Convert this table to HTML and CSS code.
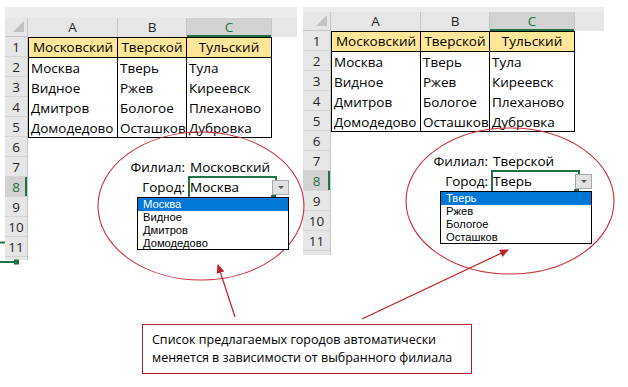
FILE: index.html
```html
<!DOCTYPE html>
<html lang="ru">
<head>
<meta charset="utf-8">
<title>Зависимый выпадающий список</title>
<link rel="stylesheet" href="styles.css">
</head>
<body>
<div class="page">
  <div class="sheets">
    <section class="sheet sheet-left">
      <div class="strip"></div>
      <div class="body">
        <div class="rowheads">
          <div class="corner"><span class="tri"></span></div>
          <div class="rh">1</div><div class="rh">2</div><div class="rh">3</div><div class="rh">4</div>
          <div class="rh">5</div><div class="rh">6</div><div class="rh">7</div><div class="rh active">8</div>
          <div class="rh">9</div><div class="rh">10</div><div class="rh">11</div><div class="rh partial"></div>
        </div>
        <div class="cols">
          <div class="colheads">
            <div class="ch ca">A</div><div class="ch cb">B</div><div class="ch cc active">C</div><div class="ch cx"></div>
          </div>
          <div class="tbl">
            <div class="cell hd">Московский</div><div class="cell hd">Тверской</div><div class="cell hd">Тульский</div>
            <div class="cell">Москва</div><div class="cell">Тверь</div><div class="cell">Тула</div>
            <div class="cell">Видное</div><div class="cell">Ржев</div><div class="cell">Киреевск</div>
            <div class="cell">Дмитров</div><div class="cell">Бологое</div><div class="cell">Плеханово</div>
            <div class="cell">Домодедово</div><div class="cell">Осташков</div><div class="cell">Дубровка</div>
          </div>
          <div class="form">
            <div class="frow short"></div>
            <div class="frow"><div class="lbl">Филиал:</div><div class="val">Московский</div></div>
            <div class="frow"><div class="lbl">Город:</div>
              <div class="val sel">Москва
                <span class="dd-btn"></span>
                <ul class="dd-list">
                  <li class="on">Москва</li><li>Видное</li><li>Дмитров</li><li>Домодедово</li>
                </ul>
              </div>
            </div>
          </div>
        </div>
      </div>
    </section>

    <section class="sheet sheet-right">
      <div class="strip"></div>
      <div class="body">
        <div class="rowheads">
          <div class="corner"><span class="tri"></span></div>
          <div class="rh">1</div><div class="rh">2</div><div class="rh">3</div><div class="rh">4</div>
          <div class="rh">5</div><div class="rh">6</div><div class="rh">7</div><div class="rh active">8</div>
          <div class="rh">9</div><div class="rh">10</div><div class="rh">11</div><div class="rh partial"></div>
        </div>
        <div class="cols">
          <div class="colheads">
            <div class="ch ca">A</div><div class="ch cb">B</div><div class="ch cc active">C</div><div class="ch cx"></div>
          </div>
          <div class="tbl">
            <div class="cell hd">Московский</div><div class="cell hd">Тверской</div><div class="cell hd">Тульский</div>
            <div class="cell">Москва</div><div class="cell">Тверь</div><div class="cell">Тула</div>
            <div class="cell">Видное</div><div class="cell">Ржев</div><div class="cell">Киреевск</div>
            <div class="cell">Дмитров</div><div class="cell">Бологое</div><div class="cell">Плеханово</div>
            <div class="cell">Домодедово</div><div class="cell">Осташков</div><div class="cell">Дубровка</div>
          </div>
          <div class="form">
            <div class="frow short"></div>
            <div class="frow"><div class="lbl">Филиал:</div><div class="val">Тверской</div></div>
            <div class="frow"><div class="lbl">Город:</div>
              <div class="val sel">Тверь
                <span class="dd-btn"></span>
                <ul class="dd-list">
                  <li class="on">Тверь</li><li>Ржев</li><li>Бологое</li><li>Осташков</li>
                </ul>
              </div>
            </div>
          </div>
        </div>
      </div>
    </section>
  </div>

  <div class="note">Список предлагаемых городов автоматически<br>меняется в зависимости от выбранного филиала</div>

  <svg class="annot" width="628" height="387" viewBox="0 0 628 387" aria-hidden="true">
    <defs>
      <marker id="ah" markerWidth="9" markerHeight="8" refX="8" refY="4" orient="auto" markerUnits="userSpaceOnUse">
        <path d="M0,0 L9,4 L0,8 z" fill="#c0202a"/>
      </marker>
    </defs>
    <ellipse cx="201" cy="206" rx="103" ry="74" fill="none" stroke="#c8303a" stroke-width="1.1"/>
    <ellipse cx="510" cy="201" rx="104" ry="73" fill="none" stroke="#c8303a" stroke-width="1.1"/>
    <line x1="235" y1="317" x2="218" y2="265" stroke="#c0202a" stroke-width="1.2" marker-end="url(#ah)"/>
    <line x1="362" y1="319" x2="508" y2="250" stroke="#c0202a" stroke-width="1.2" marker-end="url(#ah)"/>
    <path d="M0 242.5 H5" stroke="#217346" stroke-width="2"/>
    <path d="M0 262 H15" stroke="#217346" stroke-width="2"/>
    <rect x="14" y="259.5" width="5" height="5" fill="#217346"/>
  </svg>
</div>
</body>
</html>
```
FILE: styles.css
```css
* { box-sizing: border-box; margin: 0; padding: 0; }
html, body { width: 628px; height: 387px; overflow: hidden; background: #fff; }
body { font-family: "Open Sans", "Liberation Sans", sans-serif; color: #000; }

.page { position: relative; width: 628px; height: 387px; padding: 7px 0 0 5px; }
.sheets { display: flex; gap: 6px; align-items: flex-start; }
.sheet { display: flex; flex-direction: column; }

.strip { background: #ececec; }
.sheet-left .strip { height: 11px; }
.sheet-right .strip { height: 5px; }

.body { display: flex; align-items: flex-start; }

.rowheads { display: flex; flex-direction: column; background: #e6e6e6; border-right: 1px solid #c6c6c6; }
.sheet-left .rowheads { width: 23px; }
.sheet-right .rowheads { width: 28px; }

.corner { position: relative; height: 19px; border-bottom: 1px solid #c6c6c6; }
.tri { position: absolute; right: 3px; bottom: 4px; width: 11px; height: 11px; background: #c2c2c2; clip-path: polygon(100% 0, 100% 100%, 0 100%); }

.rh { height: 20px; border-bottom: 1px solid #d4d4d4; text-align: center; font-size: 13.5px; line-height: 20px; color: #262626; }
.rh.active { background: #d2d2d2; color: #217346; box-shadow: inset -2px 0 0 #217346; }
.rh.partial { border-bottom: 0; }
.sheet-left .rh.partial { height: 3px; }
.sheet-right .rh.partial { height: 4px; }

.cols { display: flex; flex-direction: column; }
.colheads { display: flex; height: 19px; background: #e6e6e6; }
.ch { border-right: 1px solid #c6c6c6; text-align: center; font-size: 13.5px; line-height: 19px; color: #262626; }
.ch.ca { width: 90px; }
.ch.cb { width: 69px; }
.ch.cc { width: 85px; }
.ch.active { background: #d2d2d2; color: #217346; box-shadow: inset 0 -2px 0 #217346; }
.ch.cx { border-right: 0; }
.sheet-left .ch.cx { width: 25px; }
.sheet-right .ch.cx { width: 29px; }

.tbl { display: grid; grid-template-columns: 89px 69px 85px; grid-template-rows: 20px 20px 20px 20px 19px; border: 1px solid #000; border-right: 0; width: 244px; }
.cell { border-right: 1px solid #000; padding: 0 2px; font-size: 13.5px; line-height: 20px; white-space: nowrap; overflow: hidden; }
.cell.hd { background: #ffe699; text-align: center; border-bottom: 1px solid #000; line-height: 19px; }

.form { width: 244px; }
.frow { display: grid; grid-template-columns: 90px 69px 85px; height: 20px; font-size: 13.5px; line-height: 20px; }
.frow.short { height: 19px; }
.lbl { grid-column: 2; text-align: right; padding-right: 2px; white-space: nowrap; }
.val { grid-column: 3; padding-left: 3px; white-space: nowrap; }

.sel { position: relative; }
.sel::before { content: ""; position: absolute; left: 1px; top: -1px; width: 85px; height: 21px; border: 2px solid #217346; }
.sel::after { content: ""; position: absolute; left: 83px; top: 17px; width: 5px; height: 5px; background: #217346; border: 1px solid #fff; }

.dd-btn { position: absolute; left: 85px; top: 3px; width: 17px; height: 15px; background: #e1e1e1; border: 1px solid #a8a8a8; z-index: 1; }
.dd-btn::after { content: ""; position: absolute; left: 5px; top: 5px; border-left: 3px solid transparent; border-right: 3px solid transparent; border-top: 3px solid #5a5a5a; }

.dd-list { position: absolute; left: -50px; top: 20px; width: 152px; height: 53px; background: #fff; border: 1px solid #000; list-style: none; font-family: "Liberation Sans", Arial, sans-serif; font-size: 11.2px; line-height: 13px; z-index: 2; }
.dd-list li { height: 13px; padding-left: 5px; color: #000; }
.dd-list li.on { background: #0078d7; color: #fff; }

.note { margin: 64px 0 0 137px; width: 330px; height: 50px; border: 1px solid #b01c28; padding: 6px 9px; font-size: 12.5px; line-height: 18px; color: #000; white-space: nowrap; }

.annot { position: absolute; left: 0; top: 0; pointer-events: none; }
```
